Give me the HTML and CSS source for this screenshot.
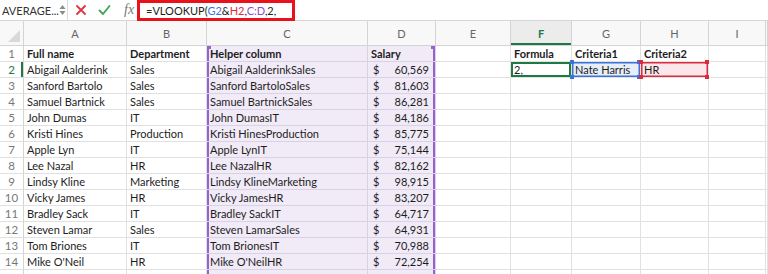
FILE: index.html
```html
<!DOCTYPE html>
<html lang="en">
<head>
    <meta charset="UTF-8">
    <meta name="viewport" content="width=device-width, initial-scale=1.0">
    <title>VLOOKUP with two criteria</title>
    <link rel="stylesheet" href="styles.css">
</head>
<body>

    <div class="toolbar">
        <div class="namebox">
            <span class="name">AVERAGE...</span>
            <span class="stepper">
                <svg width="7" height="12" viewBox="0 0 7 12"><path d="M3.5 1 L6.5 5 H0.5 Z M3.5 11 L6.5 7 H0.5 Z" fill="#8a8a8a"/></svg>
            </span>
        </div>
        <div class="icons">
            <svg class="ico" width="12" height="12" viewBox="0 0 12 12"><path d="M2 2 L10 10 M10 2 L2 10" stroke="#e2323c" stroke-width="1.8" stroke-linecap="round"/></svg>
            <svg class="ico" width="13" height="12" viewBox="0 0 13 12"><path d="M1.5 6.5 L5 10 L11.5 2" fill="none" stroke="#3aa552" stroke-width="1.8" stroke-linecap="round" stroke-linejoin="round"/></svg>
            <span class="fx">fx</span>
        </div>
        <div class="formula">=VLOOKUP(<span class="ref-g">G2</span>&amp;<span class="ref-h">H2</span>,<span class="ref-cd">C:D</span>,2,</div>
    </div>

    <table class="sheet">
        <colgroup>
            <col class="w-rh"><col class="w-a"><col class="w-b"><col class="w-c"><col class="w-d">
            <col class="w-e"><col class="w-f"><col class="w-g"><col class="w-h"><col class="w-i"><col>
        </colgroup>
        <tr class="colhead">
            <th class="corner"></th><th>A</th><th>B</th><th>C</th><th>D</th><th>E</th><th class="col-on">F</th><th>G</th><th>H</th><th>I</th><th></th>
        </tr>
        <tr class="bold">
            <th>1</th><td>Full name</td><td>Department</td><td class="rc top">Helper column</td><td class="rd top">Salary</td><td></td><td>Formula</td><td>Criteria1</td><td>Criteria2</td><td></td><td></td>
        </tr>
        <tr>
            <th class="row-on">2</th><td>Abigail Aalderink</td><td>Sales</td><td class="rc">Abigail AalderinkSales</td><td class="rd money"><span class="cur">$</span>60,569</td><td></td><td class="active">2,</td><td class="crit crit-g"><span class="ends"></span>Nate Harris</td><td class="crit crit-h"><span class="ends"></span>HR</td><td></td><td></td>
        </tr>
        <tr>
            <th>3</th><td>Sanford Bartolo</td><td>Sales</td><td class="rc">Sanford BartoloSales</td><td class="rd money"><span class="cur">$</span>81,603</td><td></td><td></td><td></td><td></td><td></td><td></td>
        </tr>
        <tr>
            <th>4</th><td>Samuel Bartnick</td><td>Sales</td><td class="rc">Samuel BartnickSales</td><td class="rd money"><span class="cur">$</span>86,281</td><td></td><td></td><td></td><td></td><td></td><td></td>
        </tr>
        <tr>
            <th>5</th><td>John Dumas</td><td>IT</td><td class="rc">John DumasIT</td><td class="rd money"><span class="cur">$</span>84,186</td><td></td><td></td><td></td><td></td><td></td><td></td>
        </tr>
        <tr>
            <th>6</th><td>Kristi Hines</td><td>Production</td><td class="rc">Kristi HinesProduction</td><td class="rd money"><span class="cur">$</span>85,775</td><td></td><td></td><td></td><td></td><td></td><td></td>
        </tr>
        <tr>
            <th>7</th><td>Apple Lyn</td><td>IT</td><td class="rc">Apple LynIT</td><td class="rd money"><span class="cur">$</span>75,144</td><td></td><td></td><td></td><td></td><td></td><td></td>
        </tr>
        <tr>
            <th>8</th><td>Lee Nazal</td><td>HR</td><td class="rc">Lee NazalHR</td><td class="rd money"><span class="cur">$</span>82,162</td><td></td><td></td><td></td><td></td><td></td><td></td>
        </tr>
        <tr>
            <th>9</th><td>Lindsy Kline</td><td>Marketing</td><td class="rc">Lindsy KlineMarketing</td><td class="rd money"><span class="cur">$</span>98,915</td><td></td><td></td><td></td><td></td><td></td><td></td>
        </tr>
        <tr>
            <th>10</th><td>Vicky James</td><td>HR</td><td class="rc">Vicky JamesHR</td><td class="rd money"><span class="cur">$</span>83,207</td><td></td><td></td><td></td><td></td><td></td><td></td>
        </tr>
        <tr>
            <th>11</th><td>Bradley Sack</td><td>IT</td><td class="rc">Bradley SackIT</td><td class="rd money"><span class="cur">$</span>64,717</td><td></td><td></td><td></td><td></td><td></td><td></td>
        </tr>
        <tr>
            <th>12</th><td>Steven Lamar</td><td>Sales</td><td class="rc">Steven LamarSales</td><td class="rd money"><span class="cur">$</span>64,931</td><td></td><td></td><td></td><td></td><td></td><td></td>
        </tr>
        <tr>
            <th>13</th><td>Tom Briones</td><td>IT</td><td class="rc">Tom BrionesIT</td><td class="rd money"><span class="cur">$</span>70,988</td><td></td><td></td><td></td><td></td><td></td><td></td>
        </tr>
        <tr>
            <th>14</th><td>Mike O'Neil</td><td>HR</td><td class="rc">Mike O'NeilHR</td><td class="rd money"><span class="cur">$</span>72,254</td><td></td><td></td><td></td><td></td><td></td><td></td>
        </tr>
        <tr>
            <th></th><td></td><td></td><td class="rc"></td><td class="rd"></td><td></td><td></td><td></td><td></td><td></td><td></td>
        </tr>
    </table>

</body>
</html>
```

FILE: styles.css
```css
body {
    margin: 0;
    background: #fff;
    font-family: Lato, "Liberation Sans", sans-serif;
    color: #1d1d1d;
    overflow: hidden;
}

/* formula bar */
.toolbar {
    display: flex;
    height: 20px;
    border-bottom: 1px solid #d6d6d6;
    box-shadow: 0 1px 1px #ececec;
}

.namebox {
    width: 68px;
    display: flex;
    align-items: center;
    justify-content: space-between;
    padding: 0 6px 0 2px;
    box-sizing: border-box;
    border-right: 1px solid #dcdcdc;
    font-size: 11px;
    color: #333;
}

.stepper svg {
    display: block;
}

.icons {
    width: 69px;
    display: flex;
    align-items: center;
    padding-left: 7px;
    box-sizing: border-box;
    gap: 11px;
}

.fx {
    font-family: "Liberation Serif", serif;
    font-style: italic;
    font-size: 14px;
    color: #777;
    margin-left: 2px;
}

.formula {
    width: 158px;
    height: 21px;
    box-sizing: border-box;
    border: 3px solid #e8111c;
    padding-left: 6px;
    font-size: 11px;
    line-height: 15px;
    color: #222;
}

.ref-g { color: #3b72d9; }
.ref-h { color: #d92a3f; }
.ref-cd { color: #8e4fcd; }

/* grid */
.sheet {
    border-collapse: separate;
    border-spacing: 0;
    table-layout: fixed;
    width: 768px;
    font-size: 11px;
}

.w-rh { width: 24px; }
.w-a { width: 103px; }
.w-b { width: 80px; }
.w-c { width: 161px; }
.w-d { width: 68px; }
.w-e { width: 75px; }
.w-f { width: 61px; }
.w-g { width: 69px; }
.w-h { width: 68px; }
.w-i { width: 57px; }

.sheet td,
.sheet th {
    box-sizing: border-box;
    height: 16px;
    padding: 0 0 0 3px;
    line-height: 15px;
    border-right: 1px solid #e1e1e1;
    border-bottom: 1px solid #e1e1e1;
    white-space: nowrap;
    overflow: hidden;
    text-align: left;
    position: relative;
}

.sheet th {
    font-weight: normal;
    color: #777;
    text-align: center;
    padding: 0;
    font-size: 11.5px;
    border-right-color: #d4d4d4;
}

.colhead th {
    height: 25px;
    background: #f8f8f8;
    color: #666;
    font-size: 11px;
    border-bottom-color: #d4d4d4;
}

.colhead th.col-on {
    background: #ececec;
    color: #1e7a45;
    font-weight: bold;
    box-shadow: inset 0 -2px #1e7a45;
}

.corner::after {
    content: "";
    position: absolute;
    right: 3px;
    bottom: 3px;
    border-left: 12px solid transparent;
    border-bottom: 12px solid #d9d9d9;
}

.sheet th.row-on {
    color: #1e7a45;
    box-shadow: inset -2px 0 #1e7a45;
}

.bold td {
    font-weight: bold;
}

/* C:D range */
.sheet td.rc,
.sheet td.rd {
    background: #f1eaf7;
    border-right-color: #dcd0e6;
    border-bottom-color: #dcd0e6;
}

.sheet td.rc {
    box-shadow: inset 2px 0 #9562cf;
}

.sheet td.rd {
    box-shadow: inset -2px 0 #9562cf;
}

.top::before {
    content: "";
    position: absolute;
    top: 0;
    width: 4px;
    height: 3px;
    background: #9562cf;
}

.rc.top::before { left: 0; }
.rd.top::before { right: 0; }

.money {
    text-align: right !important;
    padding-right: 6px !important;
}

.cur {
    float: left;
    padding-left: 2px;
}

/* active cell and criteria refs */
.sheet td.active {
    box-shadow: inset 0 0 0 2px #1e7a45;
}

.sheet td.crit {
    overflow: visible;
}

.sheet td.crit-g {
    background: #e7eefa;
    box-shadow: inset 0 0 0 1.5px #3b72d9;
    z-index: 1;
}

.sheet td.crit-h {
    background: #fbe6ea;
    box-shadow: inset 0 0 0 1.5px #d92a3f;
    z-index: 2;
}

/* corner handles of the criteria refs */
.crit::before,
.crit::after,
.ends::before,
.ends::after {
    content: "";
    position: absolute;
    width: 4px;
    height: 4px;
}

.crit::before { left: -2px; top: -2px; }
.crit::after { left: -2px; bottom: -2px; }
.ends::before { right: -1px; top: -2px; }
.ends::after { right: -1px; bottom: -2px; }

.crit-g::before,
.crit-g::after,
.crit-g .ends::before,
.crit-g .ends::after { background: #3b72d9; }

.crit-h::before,
.crit-h::after,
.crit-h .ends::before,
.crit-h .ends::after { background: #d92a3f; }
```
